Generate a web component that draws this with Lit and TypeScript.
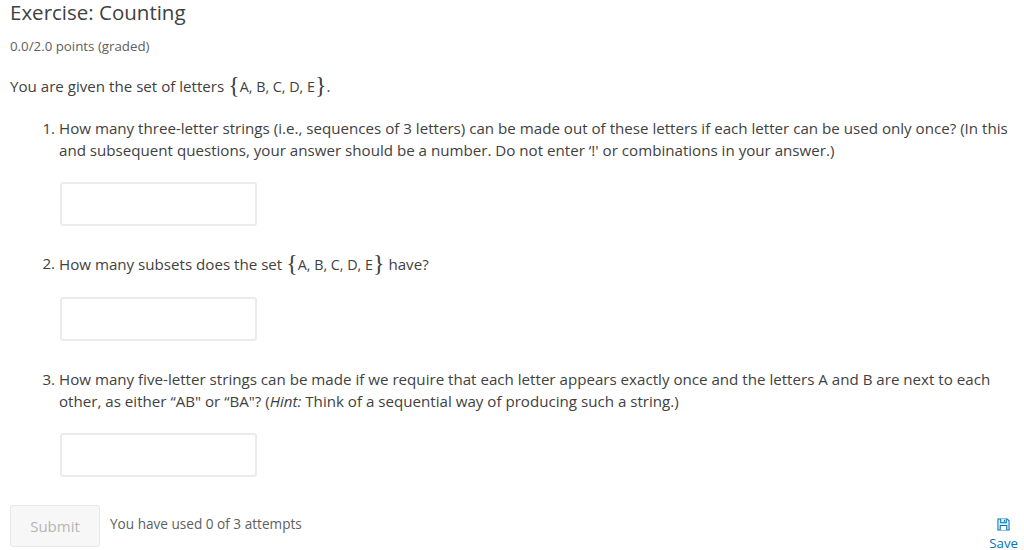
import { LitElement, html, css } from "lit";
import { customElement } from "lit/decorators.js";

const setOf = () => html`<span class="math"><span class="brace">{</span><span class="letters">A, B, C, D, E</span><span class="brace">}</span></span>`;

@customElement("app-root")
export class AppRoot extends LitElement {
  static styles = css`
    :host {
      display: block;
      width: 1024px;
      height: 550px;
      overflow: hidden;
      background: #fff;
      font-family: "Open Sans", sans-serif;
      font-size: 15.14px;
      color: #414141;
      box-sizing: border-box;
    }
    .page {
      display: flex;
      flex-direction: column;
      height: 550px;
      padding: 0 6px 0 10px;
      box-sizing: border-box;
    }
    h1 {
      margin: 0;
      font-size: 20.5px;
      font-weight: 400;
      line-height: 24px;
      color: #414141;
    }
    .points {
      margin-top: 13px;
      font-size: 13.3px;
      line-height: 18px;
      color: #5e5e5e;
    }
    .intro {
      margin: 20px 0 0;
      line-height: 21px;
      height: 21px;
    }
    .brace {
      font-family: "Liberation Serif", serif;
      font-size: 24px;
      line-height: 20px;
      vertical-align: -1px;
    }
    .letters {
      font-size: 14.3px;
    }
    ol {
      list-style: none;
      margin: 0;
      padding: 0;
    }
    li {
      display: grid;
      grid-template-columns: 49px 1fr;
    }
    .num {
      text-align: right;
      white-space: pre;
      line-height: 21.5px;
    }
    .q {
      line-height: 21.5px;
      width: 955px;
    }
    .q p {
      margin: 0;
    }
    .answer {
      display: block;
      width: 197px;
      height: 44px;
      box-sizing: border-box;
      margin: 21px 0 0 1px;
      background: #fff;
      border: 2px solid #ebebeb;
      border-radius: 3px;
      padding: 0;
    }
    .first { margin-top: 22px; }
    .second { margin-top: 27px; }
    .second .answer { margin-top: 21.5px; }
    .third { margin-top: 28px; }
    .footer {
      display: flex;
      align-items: flex-start;
      margin-top: 28px;
    }
    .submit {
      width: 90px;
      height: 42px;
      box-sizing: border-box;
      border: 1px solid #e8e8e8;
      border-radius: 3px;
      background: #f7f7f7;
      color: #b5b5b5;
      font: 400 15px "Open Sans", sans-serif;
      padding: 0;
    }
    .attempts {
      margin-left: 10px;
      font-size: 13.6px;
      line-height: 18px;
      margin-top: 10px;
      color: #5e5e5e;
    }
    .save {
      margin-left: auto;
      display: flex;
      flex-direction: column;
      align-items: center;
      margin-top: 13px;
      color: #0075b4;
      font-size: 13.3px;
      line-height: 18px;
    }
    .save svg {
      display: block;
      width: 13px;
      height: 13px;
      margin-bottom: 3px;
    }
  `;

  render() {
    return html`
      <div class="page">
        <h1>Exercise: Counting</h1>
        <div class="points">0.0/2.0 points (graded)</div>
        <p class="intro">You are given the set of letters ${setOf()}.</p>
        <ol>
          <li class="first">
            <span class="num">1. </span>
            <div class="q">
              <p>How many three-letter strings (i.e., sequences of 3 letters) can be made out of these letters if each letter can be used only once? (In this and subsequent questions, your answer should be a number. Do not enter ‘!' or combinations in your answer.)</p>
              <input class="answer" type="text" />
            </div>
          </li>
          <li class="second">
            <span class="num">2. </span>
            <div class="q">
              <p>How many subsets does the set ${setOf()} have?</p>
              <input class="answer" type="text" />
            </div>
          </li>
          <li class="third">
            <span class="num">3. </span>
            <div class="q">
              <p>How many five-letter strings can be made if we require that each letter appears exactly once and the letters A and B are next to each other, as either “AB" or “BA"? (<em>Hint:</em> Think of a sequential way of producing such a string.)</p>
              <input class="answer" type="text" />
            </div>
          </li>
        </ol>
        <div class="footer">
          <button class="submit" disabled>Submit</button>
          <span class="attempts">You have used 0 of 3 attempts</span>
          <div class="save">
            <svg viewBox="0 0 14 14" fill="#e3eff6" stroke="#0075b4" stroke-width="1.1">
              <path d="M1 1h10l2 2v10H1z" />
              <path d="M4 1v4h6V1" />
              <path d="M8 2v2" />
              <path d="M3.5 13V8h7v5" fill="#fff" />
            </svg>
            <span>Save</span>
          </div>
        </div>
      </div>
    `;
  }
}
